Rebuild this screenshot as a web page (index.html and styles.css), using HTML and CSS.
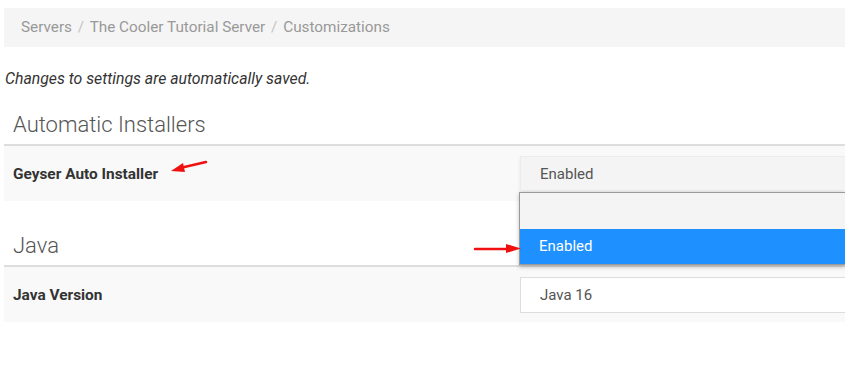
FILE: index.html
```html
<!DOCTYPE html>
<html lang="en">
<head>
    <meta charset="UTF-8">
    <meta name="viewport" content="width=device-width, initial-scale=1.0">
    <title>Customizations</title>
    <link rel="stylesheet" href="styles.css">
</head>
<body>
    <div class="page">
        <div class="breadcrumb">
            <span>Servers</span>
            <span class="sep">/</span>
            <span>The Cooler Tutorial Server</span>
            <span class="sep">/</span>
            <span>Customizations</span>
        </div>

        <p class="note">Changes to settings are automatically saved.</p>

        <div class="section first">
            <h2 class="section-title">Automatic Installers</h2>
            <div class="setting-row">
                <div class="setting-label">Geyser Auto Installer</div>
                <div class="select-wrap">
                    <div class="fake-select open">Enabled</div>
                    <div class="dropdown">
                        <div class="dropdown-option"></div>
                        <div class="dropdown-option active">Enabled</div>
                    </div>
                </div>
            </div>
        </div>

        <div class="section">
            <h2 class="section-title">Java</h2>
            <div class="setting-row">
                <div class="setting-label">Java Version</div>
                <div class="select-wrap">
                    <div class="fake-select">Java 16</div>
                </div>
            </div>
        </div>
    </div>

    <!-- red annotation arrows -->
    <svg class="annotations" width="845" height="373" viewBox="0 0 845 373">
        <line x1="206" y1="162" x2="180" y2="168" stroke="#f01010" stroke-width="2.5" stroke-linecap="round"/>
        <polygon points="171,171 183,163 185,172" fill="#f01010"/>
        <line x1="475" y1="249" x2="508" y2="249" stroke="#f01010" stroke-width="2.5" stroke-linecap="round"/>
        <polygon points="506,244 521,248.5 506,253" fill="#f01010"/>
    </svg>
</body>
</html>
```

FILE: styles.css
```css
* {
    box-sizing: border-box;
    margin: 0;
    padding: 0;
}

body {
    font-family: Roboto, 'Noto Sans', Arial, sans-serif;
    background-color: #ffffff;
    color: #333333;
    overflow: hidden;
}

.page {
    padding: 8px 0 0 4px;
    width: 845px;
}

.breadcrumb {
    height: 39px;
    line-height: 39px;
    padding-left: 17px;
    background-color: #f5f5f5;
    color: #999999;
    font-size: 15.3px;
    white-space: nowrap;
}

.breadcrumb .sep {
    color: #c4c4c4;
    margin: 0 2px;
}

.note {
    margin-top: 22px;
    padding-left: 1px;
    line-height: 20px;
    font-size: 15.8px;
    font-style: italic;
    color: #333333;
}

.section {
    margin-top: 29px;
}

.section.first {
    margin-top: 20px;
}

.section-title {
    padding: 0 9px 4px;
    line-height: 31px;
    font-size: 22px;
    font-weight: 300;
    color: #555555;
    border-bottom: 2px solid #dddddd;
}

.setting-row {
    display: flex;
    align-items: center;
    justify-content: space-between;
    height: 55px;
    padding-left: 9px;
    background-color: #f9f9f9;
}

.setting-label {
    font-size: 15.4px;
    font-weight: bold;
    color: #333333;
}

.select-wrap {
    position: relative;
    width: 325px;
}

.fake-select {
    height: 36px;
    line-height: 34px;
    padding-left: 19px;
    font-size: 15px;
    color: #555555;
    background-color: #ffffff;
    border: 1px solid #dddddd;
    border-right: none;
}

.fake-select.open {
    height: 35px;
    background-color: #f4f4f4;
    border-color: #ececec;
    box-shadow: 0 2px 3px rgba(0, 0, 0, 0.08);
}

.dropdown {
    position: absolute;
    top: 36px;
    left: -1px;
    width: 326px;
    border: 1px solid #9a9a9a;
    border-right: none;
    box-shadow: 0 2px 4px rgba(0, 0, 0, 0.25);
    z-index: 10;
}

.dropdown-option {
    height: 36px;
    line-height: 36px;
    padding-left: 19px;
    font-size: 15px;
    background-color: #f4f4f4;
}

.dropdown-option.active {
    height: 35px;
    line-height: 35px;
    background-color: #1e90ff;
    color: #ffffff;
}

.annotations {
    position: absolute;
    top: 0;
    left: 0;
    pointer-events: none;
    z-index: 20;
}
```
